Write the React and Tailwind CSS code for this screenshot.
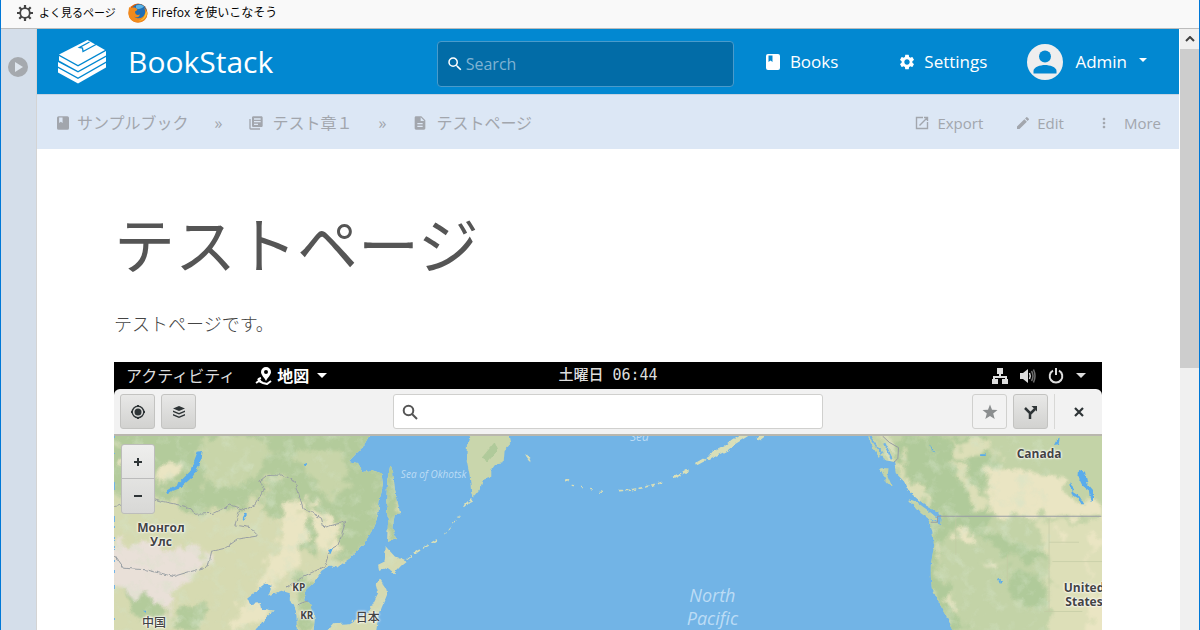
import React, { useState } from 'react';
import { MdSearch, MdSettings, MdLibraryBooks, MdDescription, MdEdit, MdMoreVert } from 'react-icons/md';

const BookIcon = ({ className }) => (
  <svg viewBox="0 0 14 16" className={className} fill="currentColor" aria-hidden="true">
    <path fillRule="evenodd" d="M2 0h10a2 2 0 0 1 2 2v12a2 2 0 0 1-2 2H2a2 2 0 0 1-2-2V2a2 2 0 0 1 2-2Zm.5 1.5V8l2-1.5 2 1.5V1.5Z" />
  </svg>
);

const ExportIcon = ({ className }) => (
  <svg viewBox="0 0 14 14" className={className} fill="none" stroke="currentColor" strokeWidth="1.4" aria-hidden="true">
    <path d="M8 1.500H1.500v11h11V6M4.500 9.500l8-8M9 1.500h3.500V5" />
  </svg>
);

const Logo = () => (
  <svg viewBox="0 0 48 44" className="h-11 w-12 shrink-0" aria-hidden="true">
    <path fill="#fff" d="M29.500 0 47 10 20 25 1 14.500Z" />
    <path fill="none" stroke="#0288d1" strokeWidth="1.300" d="M31.500 2 21.500 7.500l3 .5.500 3.500L38 4.500" />
    <g fill="#fff">
      <path d="M1 16v4.500L20 31l28-15.500V11L20 26.500Z" />
      <path d="M0 22v4.500L20 37.500l28-16V17L20 32.500Z" />
      <path d="M0 28v4.500L20 43.500l28-16V23L20 39Z" />
    </g>
  </svg>
);

const Firefox = () => (
  <svg viewBox="0 0 20 20" className="h-5 w-5" aria-hidden="true">
    <circle cx="10" cy="10" r="9.500" fill="#e66000" />
    <circle cx="11" cy="8.500" r="7.500" fill="#1f6fb5" />
    <path fill="#5cb3e4" d="M8 2.500c3-1.500 6-1 8 1-2 2-5 3-8 2Z" />
    <path fill="#f08a1c" d="M1 4c1 1 2 1 3 1 2-1 4 0 5 1 1 .5 0 1.500-2 2.500 0 3 2 4 5 3-1 3-4 3.500-6 2 3 3 9 2.500 11-3 .5-2 0-4-1-6 2 2 3.500 4 3.300 7-.5 5-4.500 8-9.300 8C4 19.500 0 15 .5 9 .5 7 1 6 1 4Z" />
    <path fill="#fbc63a" d="M19 8c.5 6-4 10-9 10 4-1 7-4 7.500-8Z" />
  </svg>
);

const GearOutline = () => (
  <svg viewBox="0 0 16 16" className="h-4 w-4 text-[#444]" fill="none" stroke="currentColor" aria-hidden="true">
    <circle cx="8" cy="8" r="4.800" strokeWidth="1.800" />
    <path strokeWidth="2.200" d="M8 0v3M8 13v3M0 8h3M13 8h3M2.300 2.300l2.200 2.200M11.500 11.500l2.200 2.200M2.300 13.700l2.200-2.200M11.500 4.500l2.200-2.200" />
  </svg>
);

const Avatar = () => (
  <svg viewBox="0 0 36 36" className="h-9 w-9" aria-hidden="true">
    <circle cx="18" cy="18" r="18" fill="#eee" />
    <circle cx="18" cy="12.500" r="6" fill="#0288d1" />
    <path fill="#0288d1" d="M6.500 29.500v-2.500c0-4 7-6 11.500-6s11.500 2 11.500 6v2.500Z" />
  </svg>
);

const Caret = ({ className }) => (
  <svg viewBox="0 0 10 5" className={className} fill="currentColor" aria-hidden="true"><path d="M0 0h10L5 5Z" /></svg>
);

const crumbs = [
  { label: 'サンプルブック', icon: <BookIcon className="h-3.5 w-3" /> },
  { label: 'テスト章１', icon: <MdLibraryBooks className="h-4 w-4" /> },
  { label: 'テストページ', icon: <MdDescription className="h-4 w-4" /> },
];

// positions are in map units, 989 wide and 200 high
const labels = [
  { lines: ['Монгол', 'Улс'], x: 47, y: 99, cls: 'text-xs font-bold' },
  { lines: ['中国'], x: 40, y: 187, cls: 'text-xs font-medium' },
  { lines: ['日本'], x: 254, y: 182, cls: 'text-xs font-medium' },
  { lines: ['KP'], x: 185, y: 151, cls: 'text-[10px] font-bold' },
  { lines: ['KR'], x: 193, y: 179, cls: 'text-[10px] font-bold' },
  { lines: ['Canada'], x: 926, y: 18, cls: 'text-xs font-bold' },
  { lines: ['United', 'States'], x: 971, y: 159, cls: 'text-xs font-bold' },
];

const seas = [
  { lines: ['Sea of Okhotsk'], x: 320, y: 38, cls: 'text-[10px]' },
  { lines: ['Sea'], x: 526, y: 1, cls: 'text-xs' },
  { lines: ['North', 'Pacific'], x: 599, y: 171, cls: 'text-lg leading-[23px]' },
];

function MapLabel({ item, className }) {
  return (
    <div
      className={'absolute -translate-x-1/2 -translate-y-1/2 whitespace-nowrap text-center ' + className + ' ' + item.cls}
      style={{ left: (item.x / 989) * 100 + '%', top: (item.y / 200) * 100 + '%' }}
    >
      {item.lines.map(l => <div key={l}>{l}</div>)}
    </div>
  );
}

function Terrain() {
  return (
    <svg viewBox="0 0 2967 600" className="block w-full bg-[#72b4e6]" aria-hidden="true">
      <defs>
        <filter id="rough" x="-5%" y="-5%" width="110%" height="110%">
          <feTurbulence type="fractalNoise" baseFrequency="0.06" numOctaves="3" seed="4" />
          <feDisplacementMap in="SourceGraphic" scale="12" xChannelSelector="R" yChannelSelector="G" />
        </filter>
        <filter id="patch" x="-10%" y="-10%" width="120%" height="120%">
          <feTurbulence type="fractalNoise" baseFrequency="0.025" numOctaves="5" seed="9" />
          <feDisplacementMap in="SourceGraphic" scale="80" xChannelSelector="R" yChannelSelector="G" />
          <feGaussianBlur stdDeviation="4" />
        </filter>
        <filter id="relief" x="0" y="0" width="100%" height="100%">
          <feTurbulence type="fractalNoise" baseFrequency="0.022" numOctaves="5" seed="21" />
          <feColorMatrix values="0 0 0 0 0.66  0 0 0 0 0.77  0 0 0 0 0.57  3 0 0 0 -1.5" />
        </filter>
        <clipPath id="asia">
          <path d="M42 230H815L790 275 748 318 775 325 790 352 815 345 845 355 850 390 840 430 835 480 815 530 790 570 750 610 712 638 690 632 665 648 645 680 618 705 610 735 635 750 645 790 640 850H592L590 780 583 750 570 738 570 715 545 708 505 722 516 693 495 685 470 708 442 728 450 748 480 745 483 762 522 767 495 790 470 825V860H42Z" />
          <path d="M872 333 880 350 885 400 902 478 885 480 878 520 890 550 862 558 865 500 860 440 862 380ZM858 575 885 605 920 620 905 632 883 655 860 640 838 645 835 630 855 620ZM840 672 860 700 862 720 845 760 835 790 825 860H660L700 808 750 805 775 790 800 780 820 745 835 715 828 690Z" />
        </clipPath>
        <clipPath id="america">
          <path d="M48 230 70 275 85 300 105 315 135 320 140 355 165 380 180 410 205 432 235 455 262 470 278 490 276 515 262 500 235 490 250 530 255 570 245 630 245 665 248 700 270 745 290 780 312 825 330 860H765V230ZM178 433 200 440 235 465 265 490 250 500 215 475ZM93 340 118 340 115 365 130 400 110 380Z" />
        </clipPath>
      </defs>

      <g transform="translate(-42 -243)">
        <g filter="url(#rough)">
          <g clipPath="url(#asia)">
            <path fill="#d6dab1" d="M0 200H960V870H0Z" />
            <g filter="url(#patch)">
              <path fill="#b3cb9b" d="M0 200H900V360L850 400 840 520 740 640 690 620 740 500 670 515 620 460 560 360 490 370 480 440 300 480 230 440 170 430 0 400Z" />
              <path fill="#c8d5a9" d="M300 243 520 243 490 340 380 400 310 380ZM580 290 720 290 760 400 700 430 620 360Z" />
              <path fill="#b3cb9b" d="M500 380 590 380 600 430 520 500 480 470ZM610 480 680 520 640 600 600 580ZM590 650 650 690 640 825 590 825ZM230 760 330 750 300 825 220 825ZM60 700 160 720 210 780 130 800Z" />
              <path fill="#eae5c3" d="M540 440 600 450 620 560 590 640 540 680 480 700 420 760 380 825 460 825 500 780 470 690 520 600 540 520ZM620 430 720 510 700 580 660 560ZM60 250 110 330 60 320ZM170 340 250 320 190 400Z" />
              <path fill="#e9e0d8" d="M20 570 100 560 250 585 330 590 310 650 240 690 210 760 110 720 30 700Z" />
              <path fill="#b3cb9b" d="M850 330H900V560H850Z" />
            </g>
            <path filter="url(#relief)" opacity=".5" d="M330 230H960V870H330ZM0 230H330V560H0Z" />
          </g>
        </g>
        <g fill="none" stroke="#9aa0a4" strokeWidth="3" strokeLinejoin="round" filter="url(#rough)">
          <path d="M42 455 160 430 190 440 260 455 290 478 340 475 390 450 435 465 465 450 492 405 480 378 500 362 545 360 585 378 610 460 665 490 672 518 738 500 715 570 690 585 675 635 610 665 560 700M420 465 405 510 450 518 475 543 415 552 375 580 335 590 325 635 270 650 220 665 140 645 70 640 42 600M590 750 625 738" />
        </g>
        <path fill="#5aaceb" filter="url(#rough)" d="M293 290 305 288 300 330 278 365 240 400 200 415 198 408 235 385 270 350ZM428 490 437 472 441 480 432 495ZM610 328 622 322 618 335ZM125 768 138 768 140 778ZM685 582 700 578 692 598Z" />
      </g>

      <g transform="translate(798 -243)" fill="#c9d6ac">
        <g filter="url(#rough)">
          <path d="M275 230H388L395 265 375 285 372 322 350 325 335 345 335 365 310 375 300 405 282 428 275 415 270 360 260 310 262 270Z" />
          <path fill="#b0ca9a" d="M345 262 355 285 325 320 305 310Z" />
        </g>
        <g fill="none" stroke="#d9dfb8" strokeLinecap="round" filter="url(#rough)">
          <path strokeWidth="5" strokeDasharray="16 14" d="M82 613 110 592 170 556" />
          <path strokeWidth="3" strokeDasharray="8 14" d="M195 540 245 472" />
          <path strokeWidth="7" strokeDasharray="14 9" d="M256 452 274 434" />
          <path strokeWidth="5" d="M441 304 450 317M559 375 564 378" />
          <path strokeWidth="4" strokeDasharray="4 26" d="M575 388 640 402 672 415" />
          <path strokeWidth="5" strokeDasharray="9 11" d="M720 407 750 406 800 396 850 382" />
          <path strokeWidth="8" strokeDasharray="18 14" d="M884 367 924 346" />
          <path strokeWidth="9" strokeDasharray="24 12" d="M955 325 1000 300" />
          <path strokeWidth="15" d="M1005 297 1040 280 1065 260 1105 235M1140 248 1150 240" />
        </g>
      </g>

      <g transform="translate(2208 -243)">
        <g filter="url(#rough)">
          <g clipPath="url(#america)">
            <path fill="#c3d3a7" d="M0 200H780V870H0Z" />
            <g filter="url(#patch)">
              <path fill="#b0ca9a" d="M150 243H400L440 320 400 350 420 480 380 540 270 520 280 470 200 400 150 320ZM240 500 290 500 270 640 300 760 360 825 310 825 240 700ZM380 520 520 570 600 600 520 620 420 570ZM470 640 580 680 580 760 500 740Z" />
              <path fill="#dddfb8" d="M80 243 150 260 160 350 230 420 270 470 180 410 120 320ZM300 260 420 260 440 300 340 310ZM300 320 340 330 420 450 390 470ZM560 500 780 500 780 860 600 860 600 620Z" />
              <path fill="#eae5c3" d="M410 345 500 330 640 370 650 430 740 440 780 560 700 600 720 700 780 720V480L480 490 430 470ZM320 520 380 530 370 570 310 550ZM260 570 275 570 265 620ZM280 690 310 740 340 800 300 770ZM380 615 470 620 430 645ZM610 530 660 540 640 570ZM720 540H790V860H720Z" />
            </g>
            <path filter="url(#relief)" opacity=".5" d="M0 230H600V870H0Z" />
          </g>
          <path fill="none" stroke="#72b4e6" strokeWidth="7" d="M62 243 95 290 100 318M105 265 128 310M230 455 275 485" />
          <path fill="none" stroke="#c9d6ac" strokeWidth="7" d="M75 255 90 275M95 295 112 315M120 280 138 318" />
        </g>
        <g fill="#5aaceb" filter="url(#rough)">
          <path d="M690 345 708 350 715 385 732 405 732 440 724 440 720 410 700 395 688 370ZM664 382 674 392 672 412 692 425 706 448 697 448 688 430 668 418ZM443 668 460 685 452 686ZM242 268 256 290 248 284ZM393 298H410V303H393ZM625 250 632 248 628 268 615 270Z" />
        </g>
        <g fill="none" stroke="#979ca3" strokeWidth="3">
          <path d="M265 484H757M265 484V502H245M100 243 120 262 148 278 146 310 135 322" />
          <path stroke="#c3caa4" strokeWidth="2" d="M600 490V770M600 562H690M610 620H760M585 770H700M320 485V600M475 600V680" />
        </g>
      </g>
    </svg>
  );
}

const toolButton = 'flex h-[35px] w-[35px] items-center justify-center rounded-[3px] border border-[#c3c3c1] bg-linear-to-b from-[#e8e8e7] to-[#d2d2d0] text-[#2e3436]';

function MapScreenshot() {
  return (
    <div className="overflow-hidden bg-black font-['Open_Sans','Noto_Sans_CJK_JP',sans-serif]">
      <div className="grid h-[27px] grid-cols-3 items-center px-3 text-[#ddd]">
        <div className="flex items-center whitespace-nowrap text-base leading-none">
          <span>アクティビティ</span>
          <svg viewBox="0 0 18 18" className="ml-5 h-[18px] w-[18px] text-white" fill="none" stroke="currentColor" strokeWidth="2" aria-hidden="true">
            <path fill="currentColor" stroke="none" fillRule="evenodd" d="M11 0a5 5 0 0 1 5 5c0 3-3 5-5 9-2-4-5-6-5-9a5 5 0 0 1 5-5Zm0 3a2 2 0 1 0 0 4 2 2 0 0 0 0-4Z" />
            <path d="M6 11c-4 1-3 2 0 3M1 16l3-2 4 2 4 1 4-3" />
          </svg>
          <span className="ml-1 font-bold text-white">地図</span>
          <Caret className="ml-2 h-[5px] w-2.5 text-white" />
        </div>
        <div className="whitespace-nowrap text-center font-['DejaVu_Sans_Mono','Noto_Sans_CJK_JP',monospace] text-[15px] leading-none font-medium">土曜日 06:44</div>
        <div className="flex items-center justify-end gap-3 pr-1">
          <svg viewBox="0 0 16 16" className="h-4 w-4" fill="currentColor" aria-hidden="true">
            <path d="M5 0h6v6H9v2h6v3h1v5h-6v-5h3v-1H3v1h3v5H0v-5h1V8h6V6H5Z" />
          </svg>
          <svg viewBox="0 0 16 16" className="h-4 w-4" fill="none" stroke="currentColor" aria-hidden="true">
            <path fill="currentColor" stroke="none" d="M0 5h3l5-4v14l-5-4H0Z" />
            <path strokeWidth="1.500" d="M9.500 5q1.500 3 0 6" />
            <path strokeWidth="1.500" opacity=".5" d="M11.500 3q3 5 0 10M13.500 1.500q3 6.500 0 13" />
          </svg>
          <svg viewBox="0 0 16 16" className="h-4 w-4" fill="none" stroke="currentColor" strokeWidth="2" aria-hidden="true">
            <path d="M5 2.700a6.300 6.300 0 1 0 6 0M8 0v7" />
          </svg>
          <Caret className="h-[5px] w-2.5" />
        </div>
      </div>

      <div className="grid h-[47px] grid-cols-[1fr_44%_1fr] items-center rounded-t-md border-b-2 border-[#b9b7ae] bg-[#f2f2f2] px-1.5">
        <div className="flex gap-1.5">
          <button type="button" aria-label="現在地" className={toolButton}>
            <svg viewBox="0 0 16 16" className="h-4 w-4" fill="none" stroke="currentColor" aria-hidden="true">
              <circle cx="8" cy="8" r="3.500" fill="currentColor" stroke="none" />
              <circle cx="8" cy="8" r="5.800" strokeWidth="1.400" />
              <path strokeWidth="2" d="M8 1v2M8 13v2M1 8h2M13 8h2" />
            </svg>
          </button>
          <button type="button" aria-label="レイヤー" className={toolButton}>
            <svg viewBox="0 0 14 14" className="h-3.5 w-3.5" fill="currentColor" aria-hidden="true">
              <path d="M7 1l6 2.500L7 6 1 3.500ZM1 5.500 7 8l6-2.500V7L7 9.500 1 7ZM1 9l6 2.500L13 9v1.500L7 13l-6-2.500Z" />
            </svg>
          </button>
        </div>
        <label className="flex h-[35px] items-center rounded-[3px] border border-[#d0d0ce] bg-white pl-2 text-[#555]">
          <svg viewBox="0 0 16 16" className="h-4 w-4 shrink-0" fill="none" stroke="currentColor" strokeWidth="2" aria-hidden="true">
            <circle cx="6.500" cy="6.500" r="4.800" /><path d="m10 10 5 5" />
          </svg>
          <input type="text" aria-label="場所を検索" className="ml-2 h-full min-w-0 flex-1 bg-transparent text-sm outline-none" />
        </label>
        <div className="flex items-center justify-end">
          <button type="button" aria-label="お気に入り" className="mr-1.5 flex h-[35px] w-[35px] items-center justify-center rounded-[3px] border border-[#d0d0ce] text-[#8b8e8f]">
            <svg viewBox="0 0 16 16" className="h-4 w-4" fill="currentColor" aria-hidden="true">
              <path d="m8 .5 2 5.200 5.500.3-4.300 3.500 1.500 5.500L8 12l-4.700 3 1.500-5.500L.5 6l5.500-.3Z" />
            </svg>
          </button>
          <button type="button" aria-label="経路" className={toolButton}>
            <svg viewBox="0 0 14 14" className="h-3.5 w-3.5" fill="none" stroke="currentColor" strokeWidth="2.500" aria-hidden="true">
              <path d="M1 3l5 5v6M6 9l5-5" /><path fill="currentColor" stroke="none" d="M7.500 1H13v5.500Z" />
            </svg>
          </button>
          <div className="mx-1.5 h-[35px] w-px bg-[#d8d8d6]" />
          <button type="button" aria-label="閉じる" className="flex h-[35px] w-[35px] items-center justify-center text-[#2e3436]">
            <svg viewBox="0 0 10 10" className="h-2.5 w-2.5" stroke="currentColor" strokeWidth="2.200" aria-hidden="true"><path d="m1 1 8 8M9 1 1 9" /></svg>
          </button>
        </div>
      </div>

      <div className="relative overflow-hidden">
        <Terrain />
        {seas.map(s => <MapLabel key={s.lines[0]} item={s} className="italic text-[#bcdcf5]" />)}
        {labels.map(l => (
          <MapLabel key={l.lines[0]} item={l} className="leading-[14px] text-[#444] [text-shadow:0_0_2px_#fff,0_0_2px_#fff,0_0_3px_#fff]" />
        ))}
        <div className="absolute top-2 left-[7px] flex flex-col divide-y divide-[#bbb] rounded-[3px] border border-[#bdbdbb] bg-linear-to-b from-[#eeeeed] to-[#d8d8d6] text-[#2e3436]">
          <button type="button" aria-label="拡大" className="flex h-[34px] w-8 items-center justify-center">
            <svg viewBox="0 0 10 10" className="h-2.5 w-2.5" stroke="currentColor" strokeWidth="2" aria-hidden="true"><path d="M5 1v8M1 5h8" /></svg>
          </button>
          <button type="button" aria-label="縮小" className="flex h-[34px] w-8 items-center justify-center">
            <svg viewBox="0 0 10 10" className="h-2.5 w-2.5" stroke="currentColor" strokeWidth="2" aria-hidden="true"><path d="M1 5h8" /></svg>
          </button>
        </div>
      </div>
    </div>
  );
}

export default function App() {
  const [term, setTerm] = useState('');

  return (
    <div className="flex h-screen flex-col overflow-hidden border-x border-[#0078d7] bg-white font-['Open_Sans','Noto_Sans_CJK_JP',sans-serif] text-[#444]">
      <nav className="flex h-[29px] shrink-0 items-center border-b border-[#bcbcbc] bg-[#f9f9f9] px-4 pb-0.5 text-black">
        <a href="#most" className="flex items-center gap-1.5 text-[11px]"><GearOutline />よく見るページ</a>
        <a href="#start" className="ml-3 flex items-center gap-1 text-xs"><Firefox />Firefox を使いこなそう</a>
      </nav>

      <div className="flex min-h-0 flex-1">
        <aside className="w-9 shrink-0 border-r border-[#d4d4d4] bg-[#d4deea] pt-7 pl-[7px]">
          <button type="button" aria-label="Open sidebar" className="flex h-5 w-5 items-center justify-center rounded-full bg-[#a5a9ae]">
            <svg viewBox="0 0 8 10" className="ml-0.5 h-2.5 w-2" fill="#dfe6ee" aria-hidden="true"><path d="M0 0l8 5-8 5Z" /></svg>
          </button>
        </aside>

        <div className="min-w-0 flex-1 overflow-hidden">
          <header className="flex h-[65px] items-center bg-[#0288d1] text-white">
            <a href="#home" className="flex w-[35%] items-center gap-[22px] pl-[21px] text-[30px]">
              <Logo />
              <span>BookStack</span>
            </a>
            <form className="mt-1 flex h-[46px] w-[26%] items-center rounded-sm border border-[#4a9bcb] bg-[#026ca7] pl-2" onSubmit={e => e.preventDefault()}>
              <MdSearch className="h-[18px] w-[18px] shrink-0" />
              <input
                type="text"
                aria-label="Search"
                placeholder="Search"
                value={term}
                onChange={e => setTerm(e.target.value)}
                className="ml-0.5 h-full min-w-0 flex-1 bg-transparent text-base outline-none placeholder:text-[#7fb3d3]"
              />
            </form>
            <div className="flex flex-1 items-center justify-end pr-8 text-[17px]">
              <a href="#books" className="flex items-center gap-2.5"><BookIcon className="h-4 w-3.5" />Books</a>
              <a href="#settings" className="ml-15 flex items-center gap-2"><MdSettings className="h-[18px] w-[18px]" />Settings</a>
              <button type="button" className="ml-10 flex items-center gap-3">
                <Avatar />
                Admin
                <Caret className="mb-1 h-1 w-2" />
              </button>
            </div>
          </header>

          <div className="flex h-[55px] items-center justify-between border-t border-[#c5d3e2] bg-[#dce7f5] pt-0.5 pr-[18px] pl-5 text-[#a2a6ad]">
            <div className="flex items-center text-base">
              {crumbs.map((c, i) => (
                <React.Fragment key={c.label}>
                  {i > 0 && <span className="mx-[26px]">»</span>}
                  <a href={'#crumb-' + i} className="flex items-center gap-2">{c.icon}{c.label}</a>
                </React.Fragment>
              ))}
            </div>
            <div className="flex items-center gap-8 text-[15px]">
              <button type="button" className="flex items-center gap-2"><ExportIcon className="h-3.5 w-3.5" />Export</button>
              <button type="button" className="flex items-center gap-1.5"><MdEdit className="h-4 w-4" />Edit</button>
              <button type="button" className="flex items-center gap-3"><MdMoreVert className="h-4 w-4" />More</button>
            </div>
          </div>

          <main className="px-[77px] pt-[57px]">
            <h1 className="text-[61px] leading-[80px] font-normal text-[#555]">テストページ</h1>
            <p className="mt-6 mb-6 text-lg font-light">テストページです。</p>
            <MapScreenshot />
          </main>
        </div>

        <div className="flex w-5 shrink-0 flex-col items-end border-l border-white bg-[#f0f0f0]">
          <button type="button" aria-label="Scroll up" className="flex h-5 w-full shrink-0 items-center justify-center">
            <svg viewBox="0 0 10 6" className="h-1.5 w-2.5" fill="none" stroke="#404040" strokeWidth="2" aria-hidden="true"><path d="m1 5 4-4 4 4" /></svg>
          </button>
          <div className="h-[53%] w-full bg-[#cdcdcd]" />
        </div>
      </div>
    </div>
  );
}
